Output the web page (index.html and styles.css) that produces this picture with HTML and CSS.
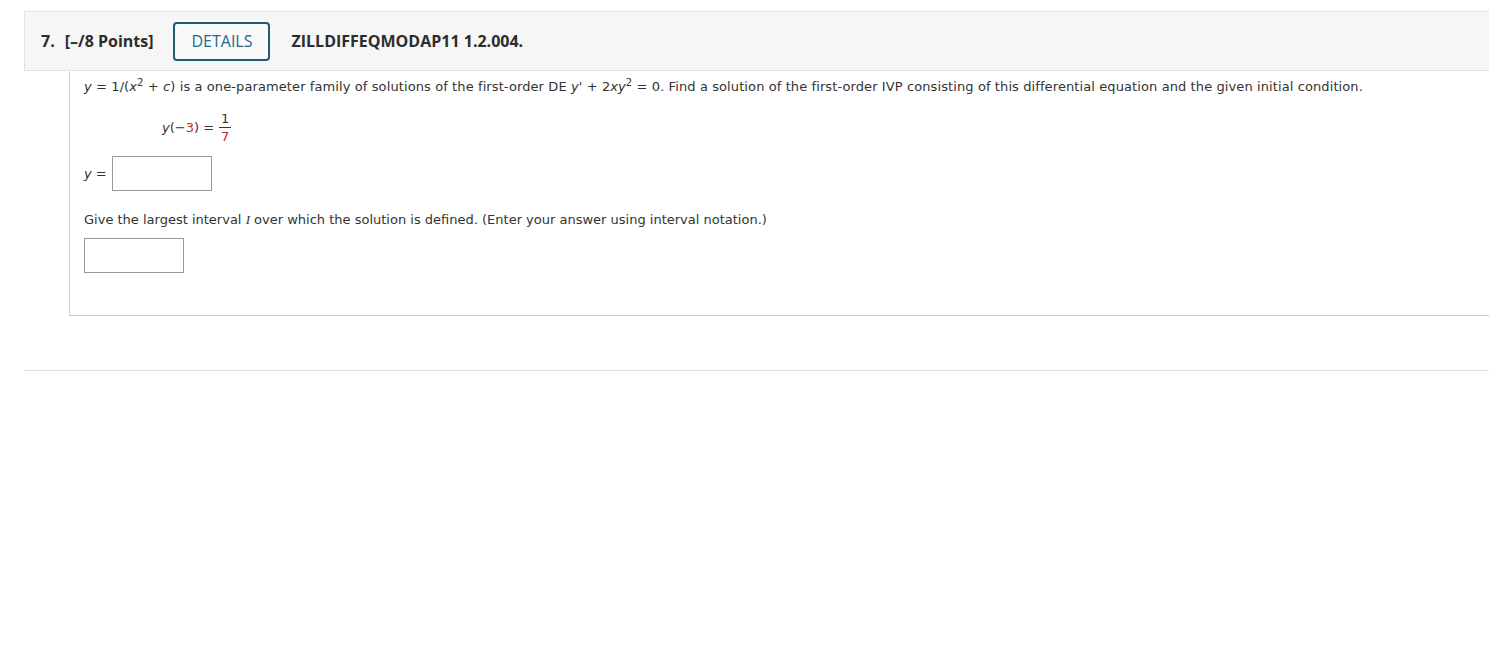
FILE: index.html
```html
<!DOCTYPE html>
<html lang="en">

<head>
    <meta charset="UTF-8">
    <meta content="width=device-width, initial-scale=1.0" name="viewport">
    <title>Question 7</title>
    <link rel="stylesheet" href="styles.css">
</head>

<body>

    <div class="question">
        <div class="question-header">
            <span class="q-number">7.</span>
            <span class="q-points">[–/8 Points]</span>
            <button class="details-btn">DETAILS</button>
            <span class="q-title">ZILLDIFFEQMODAP11 1.2.004.</span>
        </div>

        <div class="question-body">
            <p class="prompt">
                <i>y</i> = 1/(<i>x</i><sup>2</sup> + <i>c</i>) is a one-parameter family of solutions of the first-order DE
                <i>y</i>' + 2<i>xy</i><sup>2</sup> = 0. Find a solution of the first-order IVP consisting of this differential
                equation and the given initial condition.
            </p>

            <div class="condition">
                <span><i>y</i>(−<span class="red">3</span>) =</span>
                <span class="frac">
                    <span class="num">1</span>
                    <span class="den red">7</span>
                </span>
            </div>

            <div class="answer-row">
                <span><i>y</i> =</span>
                <input class="answer" type="text">
            </div>

            <p class="prompt second">
                Give the largest interval <i class="serif">I</i> over which the solution is defined. (Enter your answer using
                interval notation.)
            </p>

            <input class="answer" type="text">
        </div>
    </div>

    <hr class="divider">

</body>

</html>
```

FILE: styles.css
```css
body {
    margin: 0;
    padding: 11px 0 0 24px;
    background: #fff;
    font-family: "DejaVu Sans", Verdana, sans-serif;
    font-size: 13px;
    color: #333;
}

.question-header {
    display: flex;
    align-items: center;
    height: 58px;
    padding-left: 16px;
    background: #f6f6f6;
    border: 1px solid #e2e2e2;
    border-right: none;
    font-family: "Open Sans", sans-serif;
    font-weight: 700;
    font-size: 16px;
    color: #2d2d2d;
}

.q-points {
    margin-left: 10px;
}

.details-btn {
    margin-left: 20px;
    width: 97px;
    height: 39px;
    background: #fafafa;
    border: 2px solid #1f5a73;
    border-radius: 4px;
    font-family: "Open Sans", sans-serif;
    font-size: 16px;
    font-weight: 400;
    color: #1b6a8c;
}

.q-title {
    margin-left: 21px;
}

.question-body {
    margin-left: 45px;
    height: 245px;
    padding: 8px 0 0 14px;
    border-left: 1px solid #d0d0d0;
    border-bottom: 1px solid #c8c8c8;
    box-sizing: border-box;
}

.prompt {
    margin: 0;
    line-height: 16px;
    letter-spacing: 0.1px;
}

sup {
    font-size: 10px;
    line-height: 0;
}

.condition {
    display: flex;
    align-items: center;
    margin: 16px 0 0 78px;
}

.frac {
    display: inline-flex;
    flex-direction: column;
    align-items: center;
    margin-left: 5px;
    line-height: 15px;
}

.frac .num {
    border-bottom: 1px solid #333;
    padding: 0 2px 1px;
}

.frac .den {
    padding-top: 1px;
}

.red {
    color: #c0282d;
}

.answer-row {
    display: flex;
    align-items: center;
    gap: 5px;
    margin-top: 12px;
}

.answer {
    width: 100px;
    height: 35px;
    box-sizing: border-box;
    border: 1px solid #999;
    margin: 0;
}

.second {
    margin: 21px 0 10px;
    letter-spacing: 0;
}

.serif {
    font-family: "Liberation Serif", serif;
}

.divider {
    margin: 54px 0 0;
    border: none;
    border-top: 1px solid #ddd;
}
```
